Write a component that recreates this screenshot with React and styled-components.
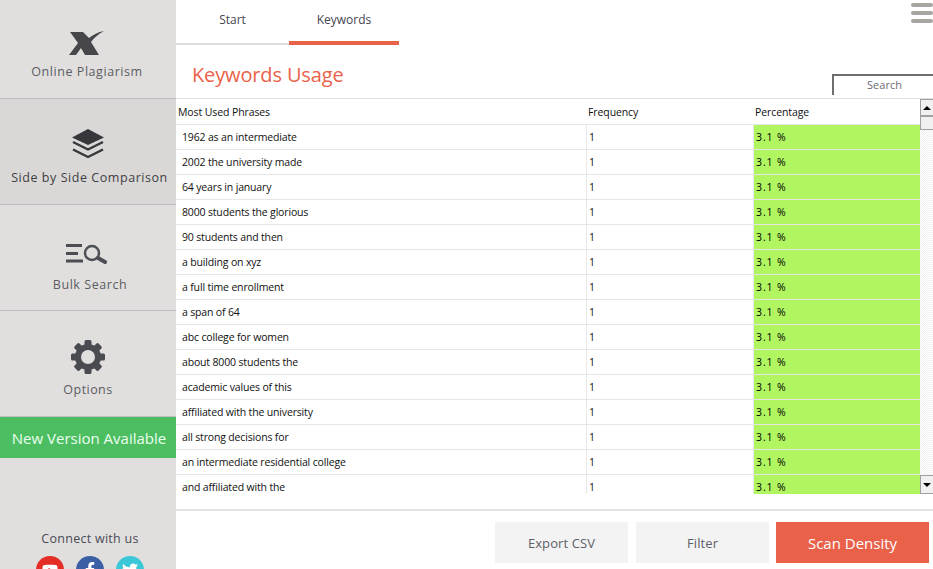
import React from "react";
import styled, { createGlobalStyle } from "styled-components";
import { FaFacebookF, FaTwitter, FaYoutube } from "react-icons/fa";

const Global = createGlobalStyle`
  html, body { margin: 0; padding: 0; height: 100%; overflow: hidden; background: #fff; }
  #root { height: 100%; }
  * { box-sizing: border-box; }
`;

const Page = styled.div`
  display: flex;
  width: 933px;
  height: 569px;
  overflow: hidden;
  font-family: "Open Sans", "Noto Sans", sans-serif;
  color: #111;
`;

const Sidebar = styled.aside`
  width: 176px;
  flex: none;
  background: #e0dfde;
  display: flex;
  flex-direction: column;
`;

const NavItem = styled.div`
  height: ${(p) => p.$h}px;
  flex: none;
  background: ${(p) => (p.$active ? "#d9d8d7" : "#e0dfde")};
  border-bottom: 1px solid #bfbdc2;
  display: flex;
  flex-direction: column;
  align-items: center;
  justify-content: flex-start;
  padding-top: ${(p) => p.$top}px;
  padding-left: ${(p) => p.$shift || 0}px;
`;

const NavLabel = styled.div`
  margin-top: ${(p) => p.$gap}px;
  margin-left: ${(p) => p.$dx || 0}px;
  font-size: 12.5px;
  line-height: 18px;
  letter-spacing: ${(p) => p.$ls ?? 0.55}px;
  color: ${(p) => (p.$active ? "#3e3e42" : "#5c5c62")};
  white-space: nowrap;
`;

const Update = styled.div`
  height: 41px;
  flex: none;
  background: #4cbe61;
  color: #eafff0;
  font-size: 15px;
  display: flex;
  align-items: center;
  justify-content: center;
  padding-left: 2px;
`;

const Connect = styled.div`
  display: flex;
  flex-direction: column;
  align-items: center;
  padding-top: 72px;
`;

const ConnectTitle = styled.div`
  font-size: 12.5px;
  line-height: 18px;
  letter-spacing: 0.27px;
  color: #4a4a55;
  padding-left: 4px;
`;

const Socials = styled.div`
  display: flex;
  gap: 12px;
  margin-top: 8px;
  padding-left: 4px;
`;

const Social = styled.div`
  width: 28px;
  height: 28px;
  border-radius: 50%;
  background: ${(p) => p.$bg};
  color: #fff;
  display: flex;
  align-items: center;
  justify-content: center;
  font-size: 16px;
`;

const Main = styled.main`
  flex: 1;
  min-width: 0;
  display: flex;
  flex-direction: column;
  background: #fff;
`;

const TopBar = styled.div`
  height: 45px;
  flex: none;
  display: flex;
  justify-content: space-between;
`;

const Tabs = styled.div`
  display: flex;
`;

const Tab = styled.div`
  width: ${(p) => p.$w}px;
  height: 45px;
  display: flex;
  align-items: center;
  justify-content: center;
  padding-bottom: ${(p) => (p.$active ? 3 : 5)}px;
  font-size: 12px;
  color: #45454f;
  border-bottom: ${(p) => (p.$active ? "4px solid #ea614a" : "2px solid #dcdcdc")};
`;

const Burger = styled.div`
  width: 22px;
  height: 22px;
  margin-top: 2px;
  display: flex;
  flex-direction: column;
  gap: 4px;
  padding-top: 1px;
`;

const BurgerBar = styled.div`
  height: 4px;
  border-radius: 2px;
  background: #a9a6a1;
`;

const TitleRow = styled.div`
  height: 54px;
  flex: none;
  display: flex;
  justify-content: space-between;
  border-bottom: 1px solid #e0e0e0;
`;

const Title = styled.h1`
  margin: 0;
  padding: 16px 0 0 16px;
  font-size: 20px;
  line-height: 28px;
  font-weight: 400;
  letter-spacing: -0.14px;
  color: #ea614a;
`;

const SearchBox = styled.div`
  width: 101px;
  height: 21px;
  margin-top: 29px;
  border-top: 2px solid #6e6e6e;
  border-left: 2px solid #6e6e6e;
  background: #fff;
  color: #6b6b78;
  font-size: 11px;
  line-height: 18px;
  text-align: center;
  padding-left: 2px;
`;

const TableWrap = styled.div`
  height: 395px;
  flex: none;
  display: flex;
  overflow: hidden;
`;

const Table = styled.div`
  flex: 1;
  min-width: 0;
`;

const HeadRow = styled.div`
  display: grid;
  grid-template-columns: 411px 167px 166px;
  height: 25px;
  font-size: 10.5px;
  line-height: 26px;
  letter-spacing: -0.1px;
  color: #111;
`;

const Row = styled.div`
  display: grid;
  grid-template-columns: 411px 167px 166px;
  height: 25px;
  border-top: 1px solid #e6e6e6;
  font-size: 10.5px;
  line-height: 24px;
  letter-spacing: -0.16px;
  color: #111;
`;

const HeadCell = styled.div`
  padding-left: ${(p) => p.$pad}px;
`;

const Cell = styled.div`
  padding-left: ${(p) => p.$pad}px;
  height: 24px;
  border-right: ${(p) => (p.$sep ? "1px solid #e8e8e8" : "0")};
  white-space: nowrap;
`;

const PercentCell = styled.div`
  height: 24px;
  padding-left: 2px;
  background: #b1f561;
  color: #000;
  letter-spacing: 0.9px;
  white-space: nowrap;
`;

const Scrollbar = styled.div`
  width: 13px;
  flex: none;
  display: flex;
  flex-direction: column;
  background: repeating-conic-gradient(#f0f0f0 0 25%, #fff 0 50%) 0 0 / 2px 2px;
`;

const ScrollButton = styled.div`
  height: ${(p) => p.$h}px;
  flex: none;
  background: #f0f0f0;
  border: 1px solid #a0a0a0;
  border-width: 1px 0 1px 1px;
  display: flex;
  align-items: center;
  justify-content: center;
  &::before {
    content: "";
    display: ${(p) => (p.$dir ? "block" : "none")};
    border-left: 4px solid transparent;
    border-right: 4px solid transparent;
    border-bottom: ${(p) => (p.$dir === "up" ? "4px solid #000" : "0")};
    border-top: ${(p) => (p.$dir === "down" ? "4px solid #000" : "0")};
  }
`;

const Track = styled.div`
  flex: 1;
`;

const Footer = styled.div`
  flex: 1;
  margin-top: 15px;
  border-top: 2px solid #e4e4e4;
  display: flex;
  justify-content: flex-end;
  gap: 7px;
  padding: 11px 4px 0 0;
`;

const Action = styled.div`
  width: ${(p) => p.$w}px;
  height: 41px;
  margin-right: ${(p) => p.$mr || 0}px;
  background: ${(p) => (p.$primary ? "#ea614a" : "#f3f3f3")};
  color: ${(p) => (p.$primary ? "#fff" : "#5c6069")};
  font-size: ${(p) => (p.$primary ? 15 : 13)}px;
  letter-spacing: ${(p) => (p.$primary ? 0 : 0.1)}px;
  display: flex;
  align-items: center;
  justify-content: center;
`;

const NavIcon = styled.svg`
  display: block;
  flex: none;
  margin-left: ${(p) => p.$ml || 0}px;
`;

const phrases = [
  "1962 as an intermediate",
  "2002 the university made",
  "64 years in january",
  "8000 students the glorious",
  "90 students and then",
  "a building on xyz",
  "a full time enrollment",
  "a span of 64",
  "abc college for women",
  "about 8000 students the",
  "academic values of this",
  "affiliated with the university",
  "all strong decisions for",
  "an intermediate residential college",
  "and affiliated with the",
];

const LogoIcon = () => (
  <NavIcon width="36" height="26" viewBox="0 0 36 26" $ml={-2}>
    <path fill="#47474b" d="M1 2h13l6 6 C24 5 29 2 35 1 C29 4 25 8 22 12 L30 25 H16 L12 18 L7 25 H0 L9 13 Z" />
  </NavIcon>
);

const LayersIcon = () => (
  <NavIcon width="32" height="32" viewBox="0 0 32 32">
    <path fill="#36363b" d="M16 1 L32 9.5 L16 17 L0 9.5 Z" />
    <path fill="none" stroke="#36363b" strokeWidth="2.4" d="M1 14 L16 21.5 L31 14 M1 21.5 L16 29 L31 21.5" />
  </NavIcon>
);

const BulkIcon = () => (
  <NavIcon width="42" height="20" viewBox="0 0 42 20" $ml={-7}>
    <path fill="#4d4e53" d="M0 0h16v3H0zM0 8h12v3H0zM0 15.500h17v3H0z" />
    <circle cx="26" cy="9" r="7" fill="none" stroke="#4d4e53" strokeWidth="2.4" />
    <path stroke="#4d4e53" strokeWidth="4" strokeLinecap="round" d="M32 14 L39 18" />
  </NavIcon>
);

const teeth = [0, 45, 90, 135, 180, 225, 270, 315];

const GearIcon = () => (
  <NavIcon width="34" height="34" viewBox="0 0 34 34">
    {teeth.map((a) => (
      <rect key={a} x="13.500" y="0" width="7" height="8" rx="1.500" fill="#4a4b50" transform={`rotate(${a} 17 17)`} />
    ))}
    <circle cx="17" cy="17" r="10" fill="none" stroke="#4a4b50" strokeWidth="6" />
  </NavIcon>
);

export default function App() {
  return (
    <Page>
      <Global />
      <Sidebar>
        <NavItem $h={99} $top={30}>
          <LogoIcon />
          <NavLabel $gap={7} $dx={-2}>Online Plagiarism</NavLabel>
        </NavItem>
        <NavItem $h={106} $top={29} $active>
          <LayersIcon />
          <NavLabel $gap={9} $active $dx={3} $ls={0.55}>Side by Side Comparison</NavLabel>
        </NavItem>
        <NavItem $h={106} $top={39} $shift={4}>
          <BulkIcon />
          <NavLabel $gap={12}>Bulk Search</NavLabel>
        </NavItem>
        <NavItem $h={106} $top={29}>
          <GearIcon />
          <NavLabel $gap={7} $ls={0.45}>Options</NavLabel>
        </NavItem>
        <Update>New Version Available</Update>
        <Connect>
          <ConnectTitle>Connect with us</ConnectTitle>
          <Socials>
            <Social $bg="#e52d27"><FaYoutube /></Social>
            <Social $bg="#3b5fa5"><FaFacebookF /></Social>
            <Social $bg="#3ac8d8"><FaTwitter /></Social>
          </Socials>
        </Connect>
      </Sidebar>
      <Main>
        <TopBar>
          <Tabs>
            <Tab $w={113}>Start</Tab>
            <Tab $w={110} $active>Keywords</Tab>
          </Tabs>
          <Burger>
            <BurgerBar />
            <BurgerBar />
            <BurgerBar />
          </Burger>
        </TopBar>
        <TitleRow>
          <Title>Keywords Usage</Title>
          <SearchBox>Search</SearchBox>
        </TitleRow>
        <TableWrap>
          <Table>
            <HeadRow>
              <HeadCell $pad={2}>Most Used Phrases</HeadCell>
              <HeadCell $pad={1}>Frequency</HeadCell>
              <HeadCell $pad={1}>Percentage</HeadCell>
            </HeadRow>
            {phrases.map((text) => (
              <Row key={text}>
                <Cell $pad={6} $sep>{text}</Cell>
                <Cell $pad={2} $sep>1</Cell>
                <PercentCell>3.1 %</PercentCell>
              </Row>
            ))}
          </Table>
          <Scrollbar>
            <ScrollButton $h={17} $dir="up" />
            <ScrollButton $h={14} />
            <Track />
            <ScrollButton $h={19} $dir="down" />
          </Scrollbar>
        </TableWrap>
        <Footer>
          <Action $w={133} $mr={1}>Export CSV</Action>
          <Action $w={133}>Filter</Action>
          <Action $w={153} $primary>Scan Density</Action>
        </Footer>
      </Main>
    </Page>
  );
}
